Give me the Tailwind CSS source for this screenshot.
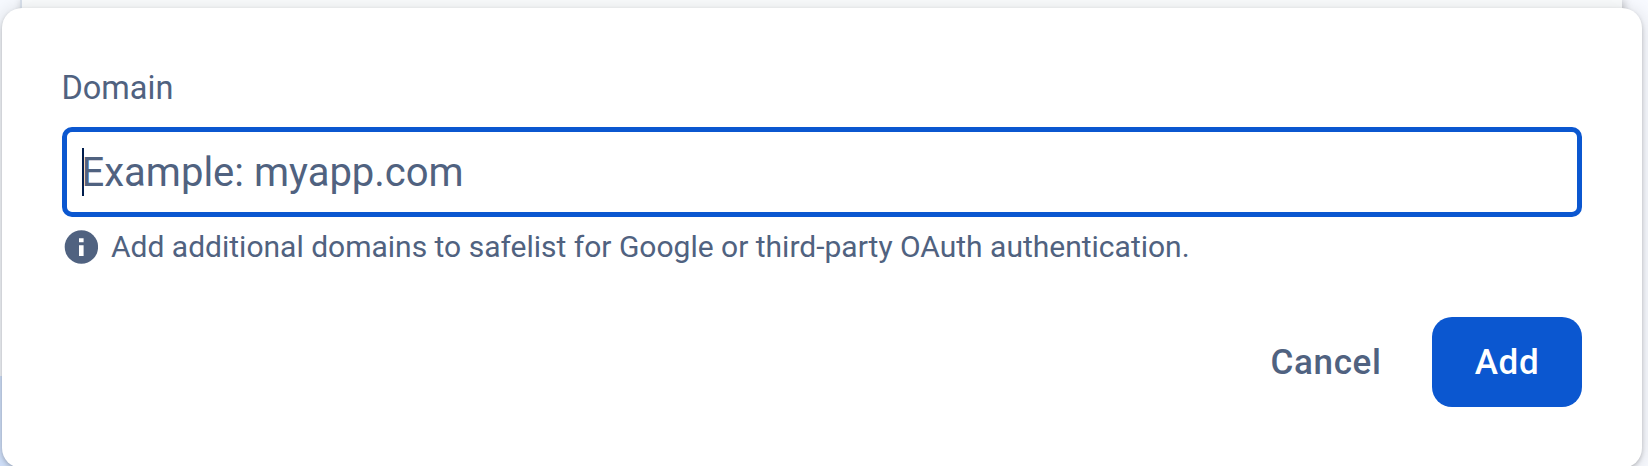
<!DOCTYPE html>
<html lang="en">
<head>
  <meta charset="UTF-8" />
  <meta name="viewport" content="width=device-width, initial-scale=1.0"/>
  <title>Add domain</title>
  <!-- Tailwind CSS CDN -->
  <script src="https://cdn.jsdelivr.net/npm/@tailwindcss/browser@4"></script>
</head>
<body class="relative h-[466px] overflow-hidden bg-[#f8faff] font-['Roboto',sans-serif] text-[#506280]">
  <!-- Page behind the dialog -->
  <div class="absolute inset-0 flex">
    <div class="flex w-5 flex-col bg-[#f6f9fe]">
      <div class="h-[376px]"></div>
      <div class="flex-grow bg-[#d3e3fd]"></div>
    </div>
    <div class="w-[1602px] border-l-2 border-[#d9e1ec] bg-[#fbfdfe] shadow-[2px_0_8px_rgba(0,0,0,0.22)]"></div>
  </div>

  <!-- Dialog -->
  <main role="dialog" class="relative mt-2 ml-0.5 h-[460px] w-[1640px] rounded-[20px] bg-white px-[60px] pt-[60px] shadow-[0_2px_4px_rgba(0,0,0,0.2),0_2px_20px_rgba(0,0,0,0.14)]">
    <label for="domain" class="-ml-[0.5px] block h-[59px] text-[32.5px] leading-[40px]">Domain</label>

    <div class="relative">
      <input id="domain" type="text" placeholder="Example: myapp.com" class="block h-[90px] w-full rounded-[10px] border-5 border-[#0b57d0] bg-white px-[14.5px] text-[40px] placeholder:text-[#506280] focus:outline-none" />
      <!-- Text cursor -->
      <span class="absolute top-[21px] left-5 h-12 w-0.5 bg-[#001d4d]"></span>
    </div>

    <p class="mt-[10px] flex h-10 items-center pl-0.5">
      <svg class="size-[34px]" viewBox="0 0 34 34">
        <circle cx="17.4" cy="17" r="16.7" fill="#506280"/>
        <path d="M15 8.3h4.6v4H15zM15 15.3h4.6V26H15z" fill="#fff"/>
      </svg>
      <span id="help" class="ml-[13px] text-[30px] leading-10">Add additional domains to safelist for Google or third-party OAuth authentication.</span>
    </p>

    <div class="mt-[50px] flex justify-end gap-[10px]">
      <button type="button" class="h-[90px] pt-0.5 pr-[40.5px] pl-10 text-[35px] font-medium tracking-[0.625px]">Cancel</button>
      <button type="button" class="h-[90px] w-[150px] rounded-[20px] bg-[#0b57d0] pt-0.5 text-[35px] font-medium tracking-[0.625px] text-white">Add</button>
    </div>
  </main>
</body>
</html>
